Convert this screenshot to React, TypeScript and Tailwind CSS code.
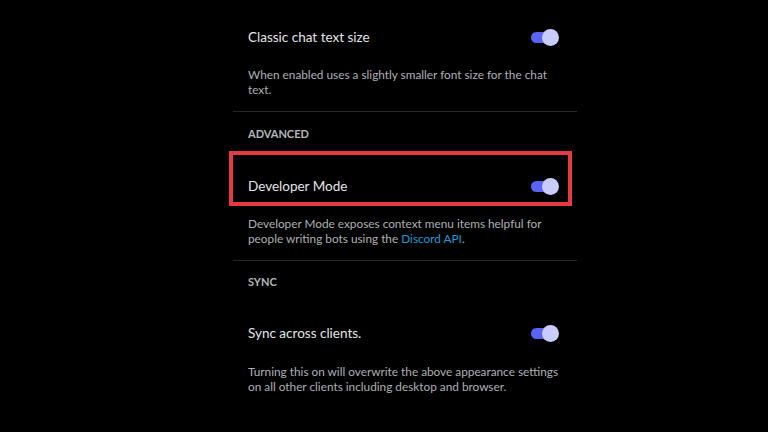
import React from "react";

function Toggle() {
  return (
    <div className="relative h-[17px] w-[28px] shrink-0">
      <div className="absolute left-0 right-[3px] top-[3px] h-[11px] rounded-full bg-[#5865f2]" />
      <div className="absolute right-0 top-0 h-[17px] w-[17px] rounded-full bg-[#c9ccf9]" />
    </div>
  );
}

function SettingRow({ label }: { label: string }) {
  return (
    <div className="flex h-[20px] items-center justify-between">
      <span className="text-[13.5px] text-[#e4e5e8]">{label}</span>
      <Toggle />
    </div>
  );
}

function Description({ children, className }: { children: React.ReactNode; className?: string }) {
  return (
    <p className={"pr-[14px] text-[11.8px] leading-[15px] text-[#aeb0b4] " + (className ?? "")}>
      {children}
    </p>
  );
}

export default function App() {
  return (
    <div
      className="h-[432px] w-[768px] overflow-hidden bg-black"
      style={{ fontFamily: "Lato, 'Open Sans', sans-serif" }}
    >
      <div className="ml-[233px] flex w-[344px] flex-col">
        {/* classic chat text size */}
        <div className="pl-[15px] pr-[18px] pt-[27px]">
          <SettingRow label="Classic chat text size" />
        </div>
        <Description className="mt-[20px] pl-[15px]">
          When enabled uses a slightly smaller font size for the chat text.
        </Description>
        <div className="mt-[14px] h-px bg-[#26272a]" />

        <div className="mt-[15px] flex h-[14px] items-center pl-[15px] text-[11px] font-bold text-[#b5b7bb]">
          ADVANCED
        </div>

        {/* developer mode */}
        <div className="-ml-[4px] mr-[5px] mt-[10px] flex h-[55px] items-end border-4 border-[#e53a3f] pb-[6px] pl-[15px] pr-[9px]">
          <div className="w-full">
            <SettingRow label="Developer Mode" />
          </div>
        </div>
        <Description className="mt-[10px] pl-[15px]">
          Developer Mode exposes context menu items helpful for people writing bots using the{" "}
          <span className="text-[#1e9bd7]">Discord API</span>.
        </Description>
        <div className="mt-[14px] h-px bg-[#26272a]" />

        <div className="mt-[14px] flex h-[14px] items-center pl-[15px] text-[11px] font-bold text-[#b5b7bb]">
          SYNC
        </div>

        {/* sync */}
        <div className="pl-[15px] pr-[18px] pt-[34px]">
          <SettingRow label="Sync across clients." />
        </div>
        <Description className="mt-[21px] pl-[15px]">
          Turning this on will overwrite the above appearance settings on all other clients including desktop and browser.
        </Description>
      </div>
    </div>
  );
}
